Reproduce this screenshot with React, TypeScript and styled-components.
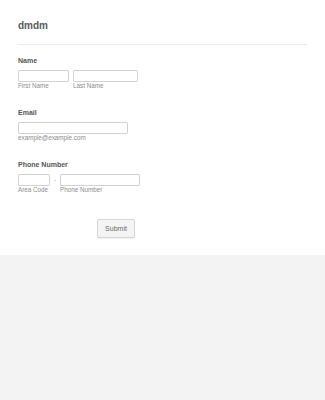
import styled, { createGlobalStyle } from 'styled-components';

const GlobalStyle = createGlobalStyle`
  html, body {
    margin: 0;
    padding: 0;
    background: #f3f3f3;
    font-family: "Liberation Sans", Arial, sans-serif;
  }
`;

const Page = styled.div`
  min-height: 400px;
  background: #f3f3f3;
`;

const Card = styled.form`
  background: #fff;
  height: 255px;
  padding: 19px 18px 0 18px;
  box-sizing: border-box;
`;

const Header = styled.div`
  border-bottom: 1px solid #ececec;
  padding-bottom: 11px;
`;

const Title = styled.h1`
  margin: 0;
  font-size: 10px;
  line-height: 14px;
  font-weight: bold;
  color: #595959;
`;

const Field = styled.div<{ $top: number }>`
  margin-top: ${(p) => p.$top}px;
`;

const Label = styled.div`
  font-size: 7px;
  line-height: 10px;
  font-weight: bold;
  color: #555;
  margin-bottom: 4px;
`;

const Row = styled.div`
  display: flex;
  gap: 4px;
  align-items: flex-start;
`;

const Cell = styled.div`
  display: flex;
  flex-direction: column;
`;

const Input = styled.input<{ $w: number }>`
  width: ${(p) => p.$w}px;
  height: 12px;
  box-sizing: border-box;
  border: 1px solid #d2d2d2;
  border-radius: 1px;
  padding: 0;
  margin: 0;
  background: #fff;
  outline: none;
`;

const SubLabel = styled.span`
  font-size: 6.3px;
  line-height: 8px;
  color: #8c8c8c;
`;

const Dash = styled.span`
  width: 2px;
  text-align: center;
  font-size: 6px;
  line-height: 12px;
  color: #888;
`;

const ButtonRow = styled.div`
  display: flex;
  margin-top: 25px;
  padding-left: 79px;
`;

const SubmitButton = styled.button`
  width: 38px;
  height: 19px;
  padding: 0;
  border: 1px solid #d6d6d6;
  border-radius: 2px;
  background: #f4f4f4;
  color: #6a6a6a;
  font-family: "Liberation Sans", Arial, sans-serif;
  font-size: 7px;
  box-shadow: 0 1px 1px rgba(0, 0, 0, 0.06);
`;

export default function App() {
  return (
    <Page>
      <GlobalStyle />
      <Card onSubmit={(e) => e.preventDefault()}>
        <Header>
          <Title>dmdm</Title>
        </Header>

        <Field $top={11}>
          <Label>Name</Label>
          <Row>
            <Cell>
              <Input $w={51} />
              <SubLabel>First Name</SubLabel>
            </Cell>
            <Cell>
              <Input $w={65} />
              <SubLabel>Last Name</SubLabel>
            </Cell>
          </Row>
        </Field>

        <Field $top={18}>
          <Label>Email</Label>
          <Cell>
            <Input $w={110} />
            <SubLabel>example@example.com</SubLabel>
          </Cell>
        </Field>

        <Field $top={18}>
          <Label>Phone Number</Label>
          <Row>
            <Cell>
              <Input $w={32} />
              <SubLabel>Area Code</SubLabel>
            </Cell>
            <Dash>-</Dash>
            <Cell>
              <Input $w={80} />
              <SubLabel>Phone Number</SubLabel>
            </Cell>
          </Row>
        </Field>

        <ButtonRow>
          <SubmitButton type="submit">Submit</SubmitButton>
        </ButtonRow>
      </Card>
    </Page>
  );
}
